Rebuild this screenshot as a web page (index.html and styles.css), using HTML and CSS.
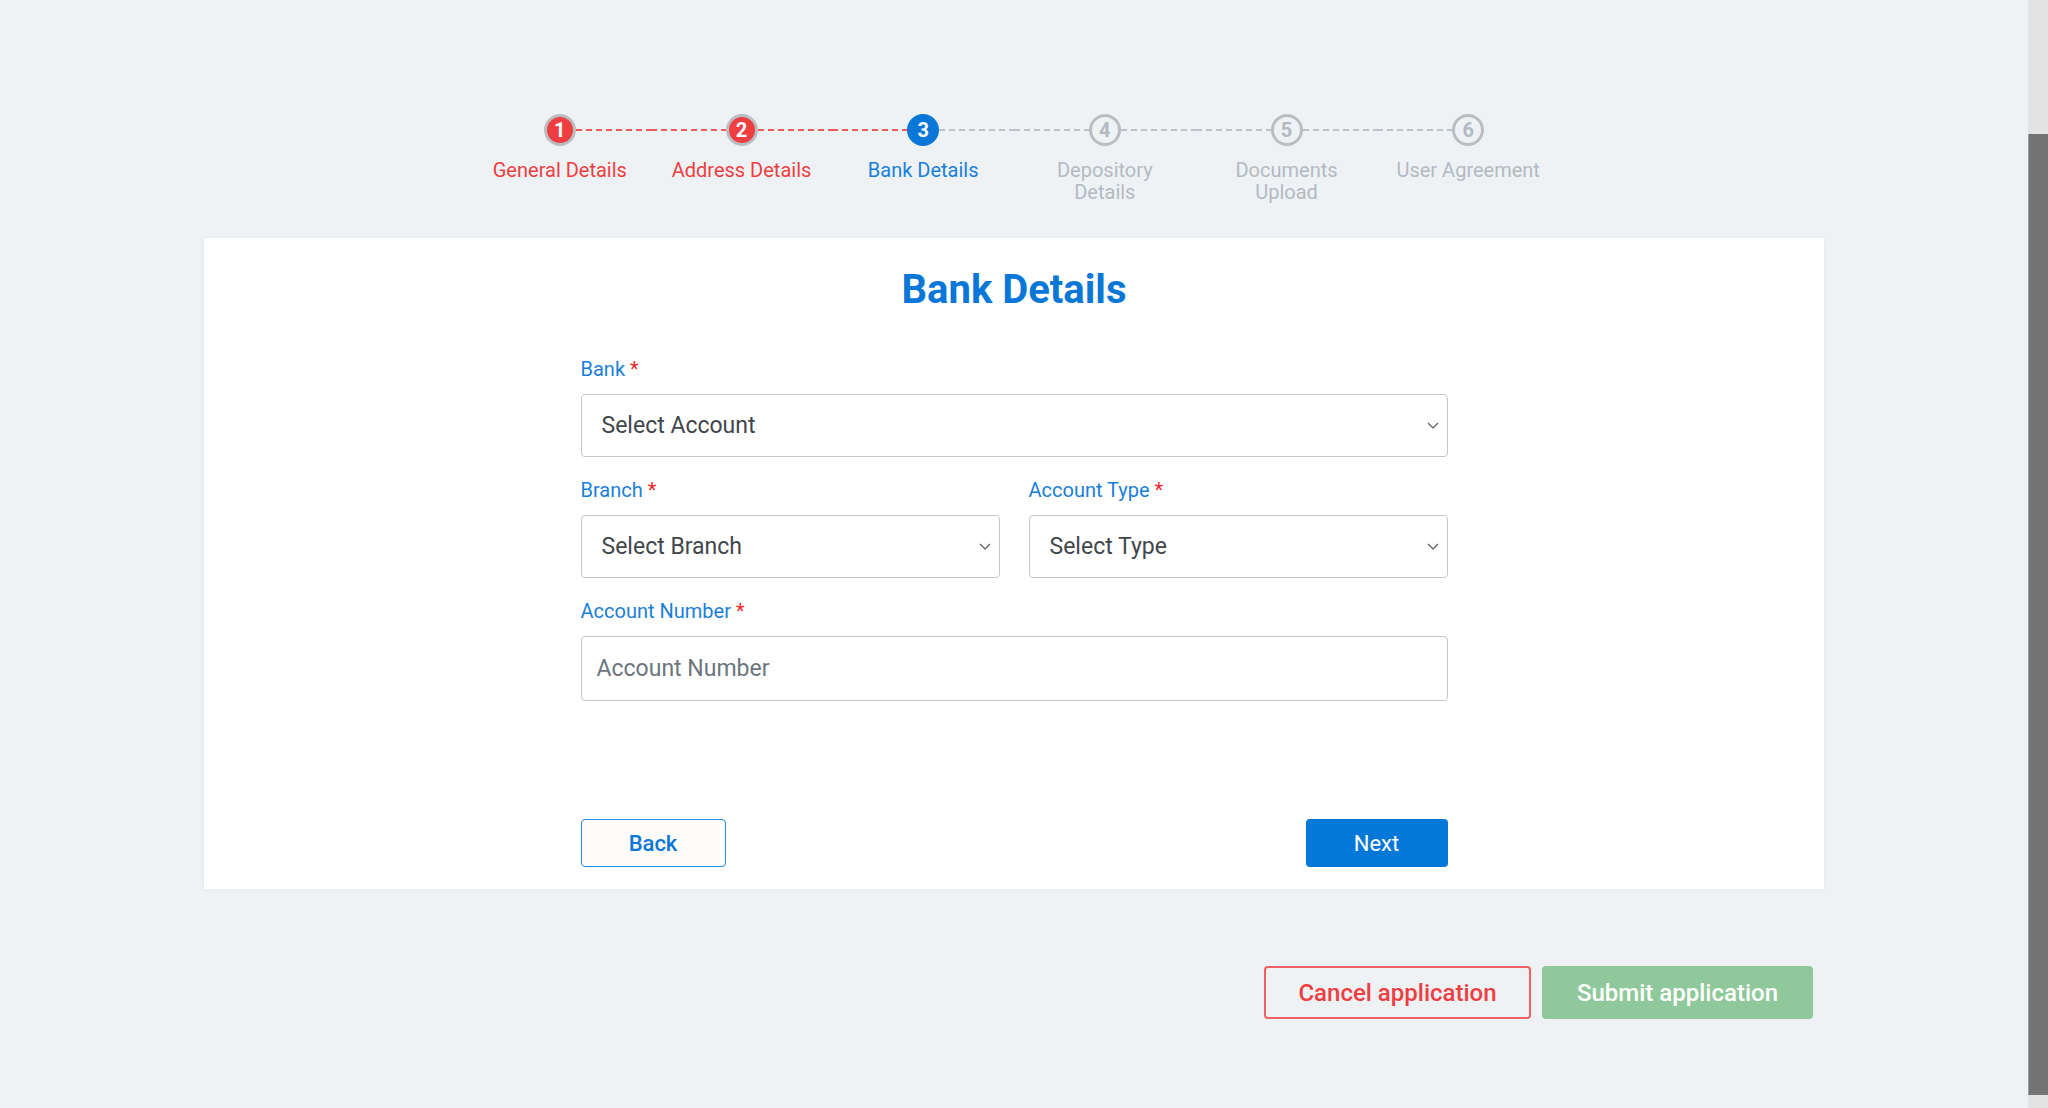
FILE: index.html
```html
<!DOCTYPE html>
<html lang="en">
	<head>
		<meta charset="utf-8" name="viewport" content="width=device-width,initial-scale=1.0" />
		<title>Bank Details</title>
		<link rel="stylesheet" href="styles.css">
	</head>
	<body>
		<div class="page">
			<main class="main">
				<ol class="stepper">
					<li class="step done">
						<div class="step-head"><span class="seg seg-none"></span><span class="dot">1</span><span class="seg seg-red"></span></div>
						<span class="step-label">General Details</span>
					</li>
					<li class="step done">
						<div class="step-head"><span class="seg seg-red"></span><span class="dot">2</span><span class="seg seg-red"></span></div>
						<span class="step-label">Address Details</span>
					</li>
					<li class="step active">
						<div class="step-head"><span class="seg seg-red"></span><span class="dot">3</span><span class="seg seg-grey"></span></div>
						<span class="step-label">Bank Details</span>
					</li>
					<li class="step">
						<div class="step-head"><span class="seg seg-grey"></span><span class="dot">4</span><span class="seg seg-grey"></span></div>
						<span class="step-label">Depository Details</span>
					</li>
					<li class="step">
						<div class="step-head"><span class="seg seg-grey"></span><span class="dot">5</span><span class="seg seg-grey"></span></div>
						<span class="step-label">Documents Upload</span>
					</li>
					<li class="step">
						<div class="step-head"><span class="seg seg-grey"></span><span class="dot">6</span><span class="seg seg-none"></span></div>
						<span class="step-label">User Agreement</span>
					</li>
				</ol>

				<section class="card">
					<h1 class="card-title">Bank Details</h1>
					<form class="form" onsubmit="return false">
						<div class="field">
							<label class="field-label">Bank <span class="req">*</span></label>
							<div class="select-wrap">
								<select class="control">
									<option>Select Account</option>
								</select>
								<svg class="chevron" width="12" height="7" viewBox="0 0 12 7"><path d="M1 1L6 6L11 1" /></svg>
							</div>
						</div>
						<div class="field-row">
							<div class="field">
								<label class="field-label">Branch <span class="req">*</span></label>
								<div class="select-wrap">
									<select class="control">
										<option>Select Branch</option>
									</select>
									<svg class="chevron" width="12" height="7" viewBox="0 0 12 7"><path d="M1 1L6 6L11 1" /></svg>
								</div>
							</div>
							<div class="field">
								<label class="field-label">Account Type <span class="req">*</span></label>
								<div class="select-wrap">
									<select class="control">
										<option>Select Type</option>
									</select>
									<svg class="chevron" width="12" height="7" viewBox="0 0 12 7"><path d="M1 1L6 6L11 1" /></svg>
								</div>
							</div>
						</div>
						<div class="field">
							<label class="field-label">Account Number <span class="req">*</span></label>
							<input class="control control-input" type="text" placeholder="Account Number">
						</div>
						<div class="form-actions">
							<button class="btn btn-back" type="button">Back</button>
							<button class="btn btn-next" type="button">Next</button>
						</div>
					</form>
				</section>

				<div class="app-actions">
					<button class="btn btn-cancel" type="button">Cancel application</button>
					<button class="btn btn-submit" type="button">Submit application</button>
				</div>
			</main>
			<aside class="scrollbar"><div class="thumb"></div></aside>
		</div>
	</body>
</html>
```

FILE: styles.css
```css
* {
	box-sizing: border-box;
}

html,
body {
	margin: 0;
	padding: 0;
	height: 100%;
	overflow: hidden;
}

body {
	background: #eef2f5;
	font-family: Roboto, "Liberation Sans", sans-serif;
	color: #343a40;
}

.page {
	display: grid;
	grid-template-columns: 1fr 20px;
	height: 100vh;
}

.main {
	padding-top: 114px;
}

/* stepper */
.stepper {
	display: flex;
	width: 1090px;
	margin: 0 auto;
	padding: 0;
	list-style: none;
}

.step {
	flex: 1;
	display: flex;
	flex-direction: column;
	align-items: center;
}

.step-head {
	display: flex;
	align-items: center;
	width: 100%;
}

.seg {
	flex: 1;
	height: 2px;
}

.seg-red {
	background: repeating-linear-gradient(to right, #f05a5d 0 6px, transparent 6px 10px);
}

.seg-grey {
	background: repeating-linear-gradient(to right, #bcc2c9 0 6px, transparent 6px 10px);
}

.dot {
	width: 32px;
	height: 32px;
	border-radius: 50%;
	border: 3px solid #b9bec3;
	display: flex;
	align-items: center;
	justify-content: center;
	font-size: 20px;
	font-weight: 700;
	color: #b3bac2;
}

.done .dot {
	background: #ef3e42;
	color: #fff;
}

.active .dot {
	background: #0877d7;
	border-color: #0877d7;
	color: #fff;
}

.step-label {
	margin-top: 13px;
	max-width: 150px;
	font-size: 20px;
	line-height: 22px;
	text-align: center;
	color: #b3bac2;
}

.done .step-label {
	color: #ef3e42;
}

.active .step-label {
	color: #1a7fd8;
}

/* card */
.card {
	width: 1620px;
	margin: 35px auto 0;
	padding: 28px 0 22px;
	background: #fff;
	box-shadow: 0 0 6px rgba(0, 0, 0, 0.05);
}

.card-title {
	margin: 0;
	font-size: 40px;
	line-height: 48px;
	font-weight: 700;
	text-align: center;
	color: #0877d7;
}

.form {
	width: 867px;
	margin: 43px auto 0;
}

.field {
	margin-bottom: 21px;
}

.field-row {
	display: grid;
	grid-template-columns: 1fr 1fr;
	column-gap: 29px;
}

.field-label {
	display: block;
	margin-bottom: 13px;
	font-size: 20px;
	line-height: 24px;
	color: #1a7fd8;
}

.req {
	color: #f02a2a;
}

.select-wrap {
	position: relative;
}

.control {
	display: block;
	width: 100%;
	height: 63px;
	padding: 0 40px 0 20px;
	border: 1px solid #c3c8cd;
	border-radius: 4px;
	background: #fff;
	font-family: Roboto, "Liberation Sans", sans-serif;
	font-size: 23px;
	color: #41464b;
	appearance: none;
	-webkit-appearance: none;
	outline: none;
}

.control-input {
	height: 65px;
	padding: 0 15px;
}

.control-input::placeholder {
	color: #6c757d;
}

.chevron {
	position: absolute;
	right: 9px;
	top: 28px;
	fill: none;
	stroke: #55595e;
	stroke-width: 1.2;
}

.form-actions {
	display: flex;
	justify-content: space-between;
	margin-top: 118px;
}

.btn {
	height: 48px;
	border-radius: 4px;
	font-family: Roboto, "Liberation Sans", sans-serif;
	font-size: 22px;
	cursor: pointer;
}

.btn-back {
	width: 145px;
	border: 1.5px solid #2b89df;
	background: #fdfcfb;
	color: #0877d7;
	font-weight: 500;
}

.btn-next {
	width: 142px;
	border: none;
	background: #0478d8;
	color: #fff;
}

/* application buttons */
.app-actions {
	display: flex;
	justify-content: flex-end;
	gap: 11px;
	width: 1620px;
	margin: 77px auto 0;
	padding-right: 11px;
}

.btn-cancel,
.btn-submit {
	height: 53px;
	font-size: 24px;
	font-weight: 500;
}

.btn-cancel {
	width: 267px;
	border: 2px solid #ef6063;
	background: transparent;
	color: #ef3e42;
}

.btn-submit {
	width: 271px;
	border: none;
	background: #8fc99b;
	color: #fff;
}

/* scrollbar */
.scrollbar {
	background: #e3e3e3;
}

.thumb {
	height: 961px;
	margin-top: 134px;
	background: #737373;
	border-left: 1px solid #a0a0a0;
}
```
